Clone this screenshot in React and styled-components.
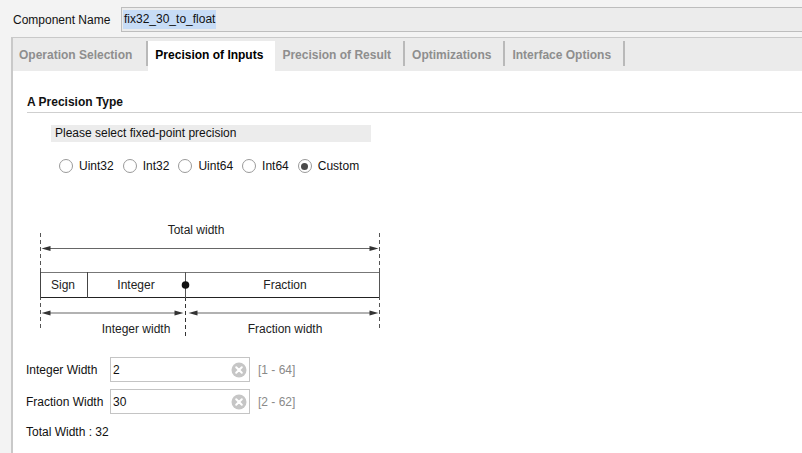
import React from 'react'
import styled, { createGlobalStyle } from 'styled-components'

const GlobalStyle = createGlobalStyle`
  html, body {
    margin: 0;
    padding: 0;
    background: #f3f3f3;
    font-family: "Liberation Sans", Arial, sans-serif;
    font-size: 12px;
    color: #111;
  }
  #root {
    height: 453px;
    overflow: hidden;
  }
`

const Window = styled.div`
  height: 453px;
  display: flex;
  flex-direction: column;
`

const NameRow = styled.div`
  display: flex;
  align-items: center;
  padding: 7px 0 0 13px;
`

const NameLabel = styled.span`
  width: 108px;
  flex: none;
`

const NameInput = styled.div`
  flex: 1;
  height: 25px;
  box-sizing: border-box;
  background: #ececec;
  border: 1px solid #bdbdbd;
  border-right: none;
  display: flex;
  align-items: center;
  padding-left: 1px;
`

const Selected = styled.span`
  background: #c7dcf6;
  line-height: 19px;
  padding: 0 1px;
`

const Panel = styled.div`
  flex: 1;
  margin: 5px 0 0 11px;
  border-left: 2px solid #c9c9c9;
  border-top: 1px solid #c9c9c9;
  display: flex;
  flex-direction: column;
`

const TabBar = styled.div`
  height: 33px;
  background: #ebebeb;
  display: flex;
  align-items: flex-end;
`

const Tab = styled.div`
  height: 30px;
  box-sizing: border-box;
  padding: 0 ${p => (p.$first ? 16 : p.$active ? 12 : 14)}px 3px ${p => (p.$first ? 6 : 7)}px;
  display: flex;
  align-items: center;
  font-weight: bold;
  color: ${p => (p.$active ? '#000' : '#8e8e8e')};
  background: ${p => (p.$active ? '#fff' : 'transparent')};
  position: relative;
  &::after {
    content: '';
    display: ${p => (p.$active ? 'none' : 'block')};
    position: absolute;
    right: 0;
    top: 0;
    bottom: 5px;
    width: 2px;
    background: #b9b9b9;
  }
`

const Content = styled.div`
  flex: 1;
  background: #fff;
  padding-left: 14px;
  display: flex;
  flex-direction: column;
`

const SectionTitle = styled.div`
  font-weight: bold;
  line-height: 16px;
  padding: 23px 0 2px;
  border-bottom: 1px solid #cfcfcf;
`

const Prompt = styled.div`
  margin: 12px 0 0 24px;
  width: 320px;
  height: 17px;
  box-sizing: border-box;
  background: #ececec;
  padding-left: 4px;
  line-height: 17px;
`

const RadioRow = styled.div`
  display: flex;
  align-items: center;
  gap: 9px;
  margin: 16px 0 0 32px;
  height: 16px;
`

const RadioItem = styled.label`
  display: flex;
  align-items: center;
  gap: 6px;
`

const RadioDot = styled.span`
  width: 14px;
  height: 14px;
  box-sizing: border-box;
  border-radius: 50%;
  border: 1px solid #9a9a9a;
  background: #fff;
  display: flex;
  align-items: center;
  justify-content: center;
  &::after {
    content: '';
    display: ${p => (p.$checked ? 'block' : 'none')};
    width: 7px;
    height: 7px;
    border-radius: 50%;
    background: #4a4a4a;
  }
`

const Diagram = styled.svg`
  display: block;
  margin-top: 41px;
  font-family: "Liberation Sans", Arial, sans-serif;
`

const Fields = styled.div`
  margin-top: 17px;
  display: flex;
  flex-direction: column;
  gap: 7px;
  margin-left: -1px;
`

const FieldRow = styled.div`
  display: flex;
  align-items: center;
`

const FieldLabel = styled.span`
  width: 84px;
  flex: none;
`

const FieldInput = styled.div`
  width: 140px;
  height: 25px;
  box-sizing: border-box;
  border: 1px solid #c4c4c4;
  background: #fff;
  display: flex;
  align-items: center;
  justify-content: space-between;
  padding: 0 2px 0 2px;
`

const ClearIcon = styled.svg`
  display: block;
`

const Range = styled.span`
  margin-left: 8px;
  color: #8a8a8a;
`

const Total = styled.div`
  margin: 10px 0 0 -1px;
  line-height: 16px;
`

function Clear() {
  return (
    <ClearIcon width="16" height="16" viewBox="0 0 16 16">
      <circle cx="8" cy="8" r="7.5" fill="#c6c6c6" />
      <path d="M5.2 5.2 L10.8 10.8 M10.8 5.2 L5.2 10.8" stroke="#fff" strokeWidth="2" strokeLinecap="round" />
    </ClearIcon>
  )
}

function Arrow({ x1, x2, y }) {
  return (
    <g>
      <line x1={x1 + 6} y1={y} x2={x2 - 6} y2={y} stroke="#666" strokeWidth="1.2" />
      <polygon points={`${x1},${y} ${x1 + 9},${y - 2.5} ${x1 + 9},${y + 2.5}`} fill="#333" />
      <polygon points={`${x2},${y} ${x2 - 9},${y - 2.5} ${x2 - 9},${y + 2.5}`} fill="#333" />
    </g>
  )
}

function PrecisionDiagram() {
  // coordinates are relative to page x - 27, y - 215
  const L = 13.5
  const R = 352.5
  const M = 158.5
  const dash = '4 3'
  return (
    <Diagram width="373" height="125" viewBox="0 0 373 125">
      <line x1={L} y1="18" x2={L} y2="115" stroke="#555" strokeDasharray={dash} />
      <line x1={R} y1="18" x2={R} y2="115" stroke="#555" strokeDasharray={dash} />
      <line x1={M} y1="82" x2={M} y2="121" stroke="#333" strokeDasharray={dash} />
      <text x="169" y="19" fontSize="12" textAnchor="middle" fill="#222">Total width</text>
      <Arrow x1={L + 1} x2={R - 1} y={33.5} />
      <line x1={L} y1="57.5" x2={R} y2="57.5" stroke="#777" />
      <line x1={L} y1="82.5" x2={R} y2="82.5" stroke="#222" />
      <line x1={L} y1="57" x2={L} y2="83" stroke="#444" />
      <line x1={R} y1="57" x2={R} y2="83" stroke="#555" />
      <line x1="60.5" y1="57" x2="60.5" y2="83" stroke="#444" />
      <line x1={M} y1="57" x2={M} y2="83" stroke="#555" />
      <circle cx={M} cy="70" r="3.8" fill="#111" />
      <text x="36" y="74" fontSize="12" textAnchor="middle" fill="#222">Sign</text>
      <text x="109" y="74" fontSize="12" textAnchor="middle" fill="#222">Integer</text>
      <text x="258" y="74" fontSize="12" textAnchor="middle" fill="#222">Fraction</text>
      <Arrow x1={L + 1} x2={M - 2} y={98} />
      <Arrow x1={M + 3} x2={R - 1} y={98} />
      <text x="109" y="118" fontSize="12" textAnchor="middle" fill="#222">Integer width</text>
      <text x="258" y="118" fontSize="12" textAnchor="middle" fill="#222">Fraction width</text>
    </Diagram>
  )
}

const tabs = ['Operation Selection', 'Precision of Inputs', 'Precision of Result', 'Optimizations', 'Interface Options']
const options = ['Uint32', 'Int32', 'Uint64', 'Int64', 'Custom']
const fields = [
  { label: 'Integer Width', value: '2', range: '[1 - 64]' },
  { label: 'Fraction Width', value: '30', range: '[2 - 62]' },
]

export default function App() {
  return (
    <Window>
      <GlobalStyle />
      <NameRow>
        <NameLabel>Component Name</NameLabel>
        <NameInput>
          <Selected>fix32_30_to_float</Selected>
        </NameInput>
      </NameRow>
      <Panel>
        <TabBar>
          {tabs.map((t, i) => (
            <Tab key={t} $first={i === 0} $active={i === 1}>{t}</Tab>
          ))}
        </TabBar>
        <Content>
          <SectionTitle>A Precision Type</SectionTitle>
          <Prompt>Please select fixed-point precision</Prompt>
          <RadioRow>
            {options.map(o => (
              <RadioItem key={o}>
                <RadioDot $checked={o === 'Custom'} />
                {o}
              </RadioItem>
            ))}
          </RadioRow>
          <PrecisionDiagram />
          <Fields>
            {fields.map(f => (
              <FieldRow key={f.label}>
                <FieldLabel>{f.label}</FieldLabel>
                <FieldInput>
                  <span>{f.value}</span>
                  <Clear />
                </FieldInput>
                <Range>{f.range}</Range>
              </FieldRow>
            ))}
          </Fields>
          <Total>Total Width : 32</Total>
        </Content>
      </Panel>
    </Window>
  )
}
